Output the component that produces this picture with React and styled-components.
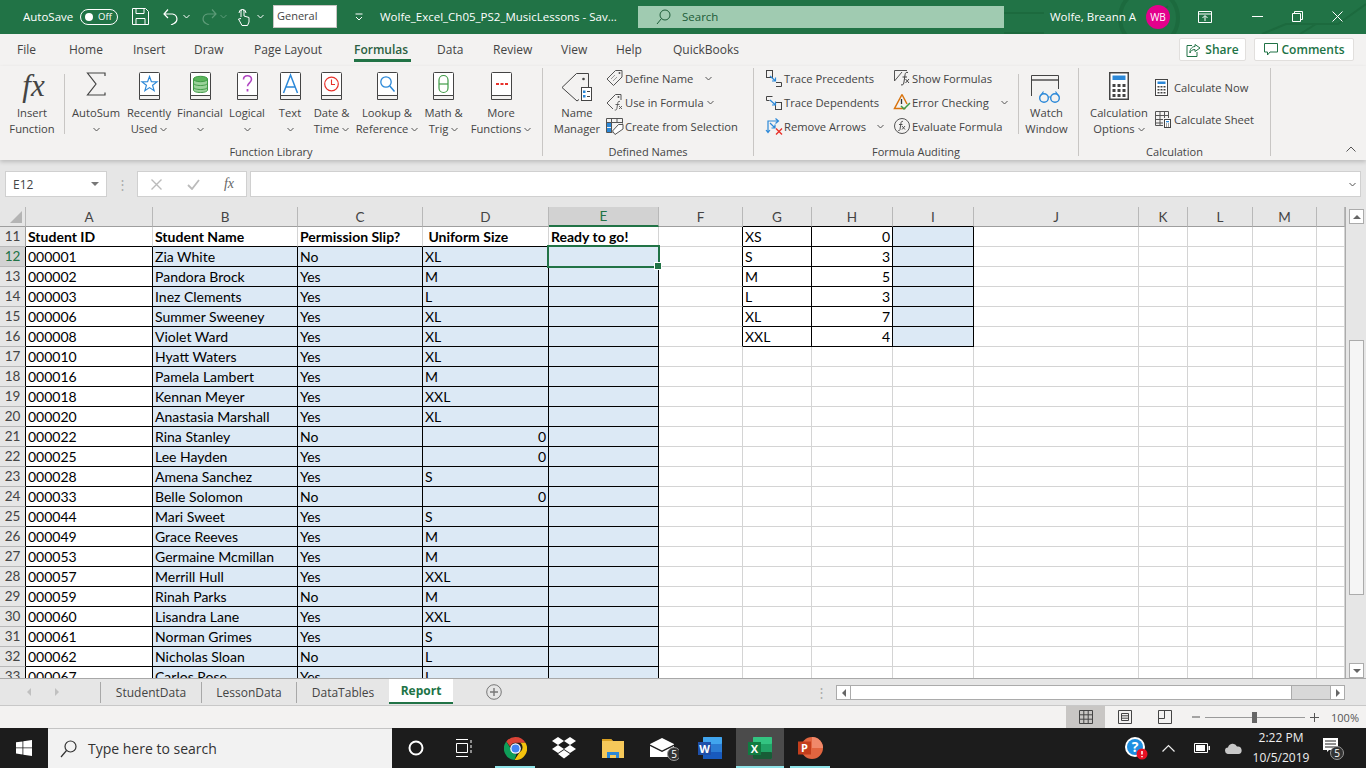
import React from "react";
import styled, { createGlobalStyle } from "styled-components";

const GREEN = "#217346";
const UI = '"Open Sans", "Noto Sans", sans-serif';
const CELL = 'Lato, "Noto Sans", sans-serif';

const Global = createGlobalStyle`
  html, body { margin: 0; padding: 0; background: #e6e6e6; }
  #root { width: 1366px; height: 768px; overflow: hidden; }
  * { box-sizing: border-box; }
`;

const Page = styled.div`
  width: 1366px;
  height: 768px;
  display: flex;
  flex-direction: column;
  font-family: ${UI};
  overflow: hidden;
`;

/* ---------- title bar ---------- */
const TitleBar = styled.div`
  position: relative;
  height: 34px;
  flex: none;
  display: flex;
  align-items: center;
  padding-bottom: 1px;
  background: ${GREEN};
  color: #fff;
  font-size: 11.5px;
`;
const Decor = styled.svg`
  position: absolute;
  top: 0;
  left: 0;
  pointer-events: none;
`;
const Slot = styled.div`
  position: relative;
  flex: none;
  width: ${(p) => p.$w}px;
  height: 100%;
  display: flex;
  align-items: center;
  justify-content: ${(p) => p.$justify || "center"};
  padding-left: ${(p) => p.$pl || 0}px;
  gap: ${(p) => p.$gap || 0}px;
  white-space: nowrap;
`;
const Toggle = styled.div`
  width: 38px;
  height: 16px;
  border: 1px solid #fff;
  border-radius: 8px;
  display: flex;
  align-items: center;
  padding-left: 4px;
  gap: 5px;
  font-size: 9.5px;
  &::before {
    content: "";
    width: 8px;
    height: 8px;
    border-radius: 50%;
    background: #fff;
  }
`;
const StyleBox = styled.div`
  width: 64px;
  height: 23px;
  background: #fff;
  color: #444;
  border: 1px solid #c8c6c4;
  font-size: 11px;
  line-height: 20px;
  padding-left: 3px;
`;
const SearchBox = styled.div`
  width: 366px;
  height: 22px;
  background: #a0cbb1;
  color: #1d5c38;
  display: flex;
  align-items: center;
  gap: 11px;
  padding-left: 18px;
  font-size: 11.5px;
`;
const Avatar = styled.div`
  width: 24px;
  height: 24px;
  border-radius: 50%;
  background: #e3008c;
  color: #fff;
  font-size: 10px;
  display: flex;
  align-items: center;
  justify-content: center;
`;

/* ---------- ribbon ---------- */
const TabRow = styled.div`
  height: 32px;
  flex: none;
  display: flex;
  align-items: flex-start;
  padding: 2px 12px 0 17px;
  background: #f3f2f1;
  color: #444;
  font-size: 12px;
`;
const Tab = styled.div`
  position: relative;
  width: ${(p) => p.$w}px;
  height: 28px;
  line-height: 27px;
  white-space: nowrap;
  color: ${(p) => (p.$active ? "#2b5f41" : "#444")};
  font-weight: ${(p) => (p.$active ? 600 : 400)};
  ${(p) =>
    p.$active &&
    `&::after { content: ""; position: absolute; left: 0; bottom: 2px; width: 57px; height: 3px; background: ${GREEN}; }`}
`;
const TabActions = styled.div`
  margin-left: auto;
  margin-top: 2px;
  display: flex;
  gap: 8px;
`;
const ActionButton = styled.div`
  width: ${(p) => p.$w}px;
  height: 23px;
  background: #fff;
  border: 1px solid #e1dfdd;
  border-radius: 2px;
  color: ${GREEN};
  font-weight: 600;
  font-size: 12px;
  display: flex;
  align-items: center;
  justify-content: center;
  gap: 4px;
`;
const Ribbon = styled.div`
  position: relative;
  z-index: 2;
  height: 94px;
  flex: none;
  display: flex;
  background: #f3f2f1;
  color: #444;
  font-size: 11.2px;
  box-shadow: 0 2px 4px rgba(0, 0, 0, 0.18);
`;
const Group = styled.div`
  width: ${(p) => p.$w}px;
  flex: none;
  display: flex;
  flex-direction: column;
  height: 88px;
  margin-top: 2px;
  border-right: 1px solid #c8c6c4;
`;
const GroupBody = styled.div`
  height: 76px;
  flex: none;
  display: flex;
  align-items: flex-start;
`;
const GroupLabel = styled.div`
  flex: none;
  text-align: center;
  font-size: 11px;
  line-height: 16px;
  color: #444;
`;
const BigButton = styled.div`
  width: ${(p) => p.$w}px;
  flex: none;
  margin-left: ${(p) => p.$ml || 0}px;
  padding-top: 4px;
  display: flex;
  flex-direction: column;
  align-items: center;
  text-align: center;
  line-height: 16px;
  white-space: nowrap;
`;
const BigIcon = styled.div`
  height: 33px;
  display: flex;
  align-items: flex-start;
  justify-content: center;
`;
const FxGlyph = styled.div`
  font-family: "Liberation Serif", serif;
  font-style: italic;
  font-size: 31px;
  line-height: 28px;
  padding-left: 3px;
  color: #444;
`;
const Line = styled.div`
  height: 16px;
  display: flex;
  align-items: center;
  justify-content: center;
  gap: 3px;
`;
const GroupSep = styled.div`
  width: 1px;
  height: 60px;
  margin-top: ${(p) => p.$top}px;
  background: #c8c6c4;
  flex: none;
`;
const SmallColumn = styled.div`
  width: ${(p) => p.$w}px;
  flex: none;
  margin-left: ${(p) => p.$ml || 0}px;
  margin-top: ${(p) => p.$top || 0}px;
`;
const SmallRow = styled.div`
  height: ${(p) => p.$h || 24}px;
  display: flex;
  align-items: center;
  white-space: nowrap;
`;
const SmallIcon = styled.div`
  width: 19px;
  flex: none;
  display: flex;
  align-items: center;
`;
const ChevronGap = styled.span`
  display: inline-flex;
  margin-left: ${(p) => p.$ml}px;
`;
const CollapseBox = styled.div`
  margin-left: auto;
  align-self: flex-end;
  padding: 0 10px 5px 0;
`;

/* ---------- formula bar ---------- */
const FormulaBar = styled.div`
  height: 47px;
  flex: none;
  display: flex;
  align-items: flex-start;
  padding: 11px 5px 0 5px;
  background: #e6e6e6;
`;
const NameBox = styled.div`
  width: 102px;
  height: 26px;
  background: #fff;
  border: 1px solid #d0d0d0;
  color: #444;
  font-size: 12px;
  display: flex;
  align-items: center;
  justify-content: space-between;
  padding: 0 7px;
`;
const Caret = styled.div`
  width: 0;
  height: 0;
  border-left: 4px solid transparent;
  border-right: 4px solid transparent;
  border-top: 4px solid #777;
`;
const Grip = styled.div`
  width: 30px;
  height: 26px;
  flex: none;
  display: flex;
  align-items: center;
  justify-content: center;
  color: #aaa;
  font-size: 13px;
`;
const FxBox = styled.div`
  width: 110px;
  height: 26px;
  flex: none;
  background: #fff;
  border: 1px solid #d0d0d0;
  display: grid;
  grid-template-columns: 37px 36px 36px;
  align-items: center;
  justify-items: center;
  color: #bbb;
`;
const FxSmall = styled.span`
  font-family: "Liberation Serif", serif;
  font-style: italic;
  font-size: 14px;
  color: #666;
`;
const FormulaInput = styled.div`
  flex: 1;
  height: 26px;
  margin-left: 3px;
  background: #fff;
  border: 1px solid #d0d0d0;
  display: flex;
  align-items: center;
  justify-content: flex-end;
  padding-right: 4px;
`;

/* ---------- sheet ---------- */
const COLUMNS = "26px 127px 145px 125px 126px 110px 84px 69px 81px 81px 165px 49px 65px 64px 28px";

const SheetArea = styled.div`
  height: 471px;
  flex: none;
  display: flex;
`;
const SheetMain = styled.div`
  width: 1345px;
  flex: none;
  display: flex;
  flex-direction: column;
`;
const HeaderRow = styled.div`
  display: grid;
  grid-template-columns: ${COLUMNS};
  height: 20px;
  flex: none;
  background: #e6e6e6;
`;
const ColHead = styled.div`
  display: flex;
  align-items: center;
  justify-content: center;
  font-family: ${CELL};
  font-size: 13.5px;
  color: ${(p) => (p.$active ? GREEN : "#444")};
  background: ${(p) => (p.$active ? "#d2d2d2" : "#e6e6e6")};
  border-right: 1px solid #b8b8b8;
  border-bottom: ${(p) => (p.$active ? `2px solid ${GREEN}` : p.$dark ? "1px solid #000" : "1px solid #9e9e9e")};
`;
const Corner = styled.div`
  border-right: 1px solid #b8b8b8;
  border-bottom: 1px solid #9e9e9e;
  display: flex;
  align-items: flex-end;
  justify-content: flex-end;
  padding: 0 3px 3px 0;
  &::after {
    content: "";
    width: 0;
    height: 0;
    border-left: 12px solid transparent;
    border-bottom: 12px solid #b4b4b4;
  }
`;
const Grid = styled.div`
  height: 451px;
  overflow: hidden;
  background: #fff;
`;
const Row = styled.div`
  display: grid;
  grid-template-columns: ${COLUMNS};
  height: 20px;
`;
const RowHead = styled.div`
  background: ${(p) => (p.$active ? "#d2d2d2" : "#e6e6e6")};
  color: ${(p) => (p.$active ? GREEN : "#444")};
  font-family: ${CELL};
  font-size: 13.5px;
  text-align: center;
  line-height: 19px;
  border-bottom: 1px solid #b8b8b8;
  border-right: 1px solid ${(p) => (p.$boxed ? "#000" : "#9e9e9e")};
`;
const Cell = styled.div`
  position: relative;
  font-family: ${CELL};
  font-size: 14px;
  line-height: 19px;
  color: #000;
  font-weight: ${(p) => (p.$bold ? 700 : 400)};
  padding: 0 2px;
  white-space: pre;
  overflow: ${(p) => (p.$selected ? "visible" : "hidden")};
  text-align: ${(p) => (p.$right ? "right" : "left")};
  background: ${(p) => (p.$fill ? "#dce9f5" : "#fff")};
  border-right: 1px solid ${(p) => (p.$edge ? "#000" : "#d4d4d4")};
  border-bottom: 1px solid ${(p) => (p.$under ? "#000" : "#d4d4d4")};
  ${(p) =>
    p.$selected &&
    `
    z-index: 2;
    &::after { content: ""; position: absolute; left: -2px; top: -2px; right: -2px; bottom: -2px; border: 2px solid ${GREEN}; }
    &::before { content: ""; position: absolute; right: -4px; bottom: -4px; width: 6px; height: 6px; background: ${GREEN}; border: 1px solid #fff; z-index: 1; }
  `}
`;
const VScroll = styled.div`
  width: 21px;
  flex: none;
  background: #e6e6e6;
  border-left: 1px solid #ababab;
  display: flex;
  flex-direction: column;
  align-items: center;
  padding: 2px 0 0 1px;
`;
const ScrollButton = styled.div`
  width: 15px;
  height: 15px;
  flex: none;
  background: #fff;
  border: 1px solid #ababab;
  display: flex;
  align-items: center;
  justify-content: center;
`;
const VThumb = styled.div`
  width: 15px;
  height: 255px;
  margin-top: 116px;
  background: #f5f5f5;
  border: 1px solid #ababab;
  flex: none;
`;
const DownButton = styled(ScrollButton)`
  margin-top: auto;
`;
const Arrow = styled.div`
  width: 0;
  height: 0;
  ${(p) =>
    p.$dir === "up"
      ? "border-left:4px solid transparent;border-right:4px solid transparent;border-bottom:4px solid #666;"
      : p.$dir === "down"
      ? "border-left:4px solid transparent;border-right:4px solid transparent;border-top:4px solid #666;"
      : p.$dir === "left"
      ? "border-top:4px solid transparent;border-bottom:4px solid transparent;border-right:4px solid #666;"
      : "border-top:4px solid transparent;border-bottom:4px solid transparent;border-left:4px solid #666;"}
`;

/* ---------- sheet tabs ---------- */
const TabsBar = styled.div`
  height: 28px;
  flex: none;
  display: flex;
  background: #e6e6e6;
  border-top: 1px solid #a8a8a8;
  border-bottom: 1px solid #c8c8c8;
  font-size: 12px;
  color: #444;
`;
const NavArrows = styled.div`
  width: 100px;
  flex: none;
  display: flex;
  align-items: center;
  gap: 24px;
  padding-left: 27px;
`;
const DimArrow = styled.div`
  width: 0;
  height: 0;
  border-top: 4px solid transparent;
  border-bottom: 4px solid transparent;
  ${(p) => (p.$left ? "border-right: 4px solid #c0c0c0;" : "border-left: 4px solid #c0c0c0;")}
`;
const SheetTab = styled.div`
  width: ${(p) => p.$w}px;
  flex: none;
  display: flex;
  align-items: center;
  justify-content: center;
  margin-top: ${(p) => (p.$active ? 0 : 3)}px;
  height: ${(p) => (p.$active ? 25 : 21)}px;
  padding-bottom: ${(p) => (p.$active ? 0 : 1)}px;
  border-left: ${(p) => (p.$active ? "none" : "1px solid #a8a8a8")};
  background: ${(p) => (p.$active ? "#fff" : "transparent")};
  color: ${(p) => (p.$active ? GREEN : "#444")};
  font-weight: ${(p) => (p.$active ? 700 : 400)};
  border-bottom: ${(p) => (p.$active ? `2px solid ${GREEN}` : "none")};
`;
const HScroll = styled.div`
  width: 509px;
  height: 15px;
  margin-top: 6px;
  flex: none;
  display: flex;
  background: #d8d8d8;
  border: 1px solid #ababab;
`;
const HLeft = styled.div`
  width: 14px;
  flex: none;
  background: #fff;
  border-right: 1px solid #ababab;
  display: flex;
  align-items: center;
  justify-content: center;
`;
const HThumb = styled.div`
  width: 441px;
  flex: none;
  background: #fff;
  border-right: 1px solid #ababab;
`;
const HRight = styled(HLeft)`
  margin-left: auto;
  border-right: none;
  border-left: 1px solid #ababab;
`;

/* ---------- status bar ---------- */
const StatusBar = styled.div`
  height: 22px;
  flex: none;
  display: flex;
  background: #f3f2f1;
  color: #555;
  font-size: 11px;
`;
const ViewButton = styled.div`
  width: ${(p) => p.$w}px;
  flex: none;
  display: flex;
  align-items: center;
  justify-content: center;
  background: ${(p) => (p.$active ? "#c8c6c4" : "transparent")};
`;
const ZoomTrack = styled.div`
  position: relative;
  width: 100px;
  height: 1px;
  background: #9a9a9a;
  flex: none;
  align-self: center;
  &::after {
    content: "";
    position: absolute;
    left: 47px;
    top: -5px;
    width: 5px;
    height: 11px;
    background: #666;
  }
`;

/* ---------- taskbar ---------- */
const Taskbar = styled.div`
  height: 40px;
  flex: none;
  display: flex;
  background: #1c1c1c;
  color: #fff;
`;
const TaskSearch = styled.div`
  width: 344px;
  flex: none;
  display: flex;
  align-items: center;
  gap: 11px;
  padding-left: 12px;
  background: #f2f2f2;
  border-top: 1px solid #c4c4c4;
  color: #333;
  font-size: 14px;
`;
const TaskItem = styled.div`
  position: relative;
  width: ${(p) => p.$w}px;
  flex: none;
  display: flex;
  align-items: center;
  justify-content: center;
  background: ${(p) => (p.$current ? "#4b4b4b" : "transparent")};
  ${(p) =>
    p.$line &&
    `&::after { content: ""; position: absolute; left: ${p.$inset || 0}px; right: ${p.$inset || 0}px; bottom: 0; height: 2px; background: #8fe3e8; }`}
`;
const Clock = styled.div`
  width: 66px;
  flex: none;
  display: flex;
  flex-direction: column;
  justify-content: center;
  align-items: center;
  font-size: 12px;
  line-height: 20px;
  color: #eee;
`;

/* ---------- icons ---------- */
const Chevron = ({ color = "#555" }) => (
  <svg width="7" height="5" viewBox="0 0 7 5" fill="none">
    <path d="M.5 1 3.5 4 6.5 1" stroke={color} strokeWidth="1" />
  </svg>
);

const Book = ({ children }) => (
  <svg width="21" height="28" viewBox="0 0 21 28" fill="none">
    <path d="M.5 26V1.5a1 1 0 0 1 1-1h18a1 1 0 0 1 1 1V26" fill="#fff" stroke="#444" />
    <path d="M.5 23.5h20v4H.5z" fill="#f3f2f1" stroke="#444" />
    {children}
  </svg>
);

const stroke = (c, w = 1) => ({ stroke: c, strokeWidth: w, fill: "none" });

const TraceBoxes = ({ flip }) => (
  <svg width="18" height="18" viewBox="0 0 18 18" fill="none">
    {flip ? (
      <>
        <path d="M1.500 3.500h6M1.500 3.500v4h3" {...stroke("#444")} />
        <rect x="10.500" y="9.500" width="6" height="7" {...stroke("#444")} />
      </>
    ) : (
      <>
        <rect x="1.500" y="1.500" width="6" height="7" {...stroke("#444")} />
        <path d="M11 13.500h5.500v4M11 17.500h5.500" {...stroke("#444")} />
      </>
    )}
    <path d="M5 7 10.500 12M10.500 8.500V12H7" {...stroke("#2b88d8", 1.2)} />
  </svg>
);

const BIG_ICONS = {
  sum: (
    <svg width="20" height="25" viewBox="0 0 20 25" fill="none">
      <path d="M19 4V1H1.500L10 12 1.500 23H19v-2.500" stroke="#444" strokeWidth="1.200" />
    </svg>
  ),
  star: (
    <Book>
      <path d="M10.500 4.500l1.900 5.200 5.600.2-4.400 3.400 1.500 5.400-4.600-3.100-4.600 3.100 1.500-5.400L3 9.900l5.600-.2z" {...stroke("#2b88d8", 1.2)} />
    </Book>
  ),
  db: (
    <Book>
      <path d="M3.500 7v11c0 1.600 3.100 2.500 7 2.500s7-.9 7-2.500V7" fill="#9ad29a" stroke="#3f9a46" />
      <ellipse cx="10.500" cy="7" rx="7" ry="2.700" fill="#5cb55c" stroke="#3f9a46" />
      <path d="M3.500 11c0 1.600 3.100 2.500 7 2.500s7-.9 7-2.500M3.500 15c0 1.600 3.100 2.500 7 2.500s7-.9 7-2.500" {...stroke("#3f9a46")} />
    </Book>
  ),
  logical: (
    <Book>
      <path d="M6.500 7.500c0-2.400 1.800-3.800 4-3.800s4 1.500 4 3.600c0 3.400-4 3.600-4 7" {...stroke("#b146c2", 1.6)} />
      <path d="M10.500 17v2.500" {...stroke("#b146c2", 1.8)} />
    </Book>
  ),
  text: (
    <Book>
      <path d="M3.500 21 10.500 3l7 18M6 15h9" {...stroke("#2b88d8", 1.5)} />
    </Book>
  ),
  clock: (
    <Book>
      <circle cx="10.500" cy="12" r="6.800" {...stroke("#e8312a", 1.2)} />
      <path d="M10.500 7.500V12.500H14" {...stroke("#e8312a", 1.1)} />
    </Book>
  ),
  lookup: (
    <Book>
      <circle cx="9" cy="10" r="5.200" {...stroke("#2b88d8", 1.3)} />
      <path d="M12.800 14 17.500 19.500" {...stroke("#2b88d8", 1.5)} />
    </Book>
  ),
  math: (
    <Book>
      <rect x="6" y="3.500" width="9" height="17" rx="4.500" {...stroke("#3f9a46", 1.2)} />
      <path d="M6 12h9" {...stroke("#3f9a46", 1.2)} />
    </Book>
  ),
  more: (
    <Book>
      <path d="M5 12h3M9.500 12h3M14 12h3" {...stroke("#e8312a", 2.2)} />
    </Book>
  ),
  name: (
    <svg width="32" height="32" viewBox="0 0 32 32" fill="none">
      <path d="M1 15.500 15.500 1.500H27.500V15M18 27.500 16 29 1 15.500" {...stroke("#444")} />
      <circle cx="22.500" cy="7" r="1.300" fill="#444" />
      <rect x="20.500" y="15.500" width="10" height="13" fill="#fff" stroke="#444" />
      <path d="M22 18.500h2.500v2.500H22zM22 23h2.500v2.500H22z" fill="#2b88d8" />
      <path d="M26 19.500h3M26 24.500h3" {...stroke("#444")} />
    </svg>
  ),
  watch: (
    <svg width="31" height="32" viewBox="0 -3 31 32" fill="none">
      <path d="M.5 21V.5h27V14" {...stroke("#444")} />
      <path d="M.5 5h27" {...stroke("#444", 1.4)} />
      <circle cx="13" cy="23" r="4.300" {...stroke("#2b88d8", 1.4)} />
      <circle cx="24" cy="23" r="4.300" {...stroke("#2b88d8", 1.4)} />
      <path d="M17.300 22h2.400M9 21.500l3.500-5M28 21.500l-3.500-5" {...stroke("#2b88d8", 1.2)} />
    </svg>
  ),
  calc: (
    <svg width="20" height="28" viewBox="0 0 20 28" fill="none">
      <rect x=".75" y=".75" width="18.500" height="26.500" fill="#fff" stroke="#444" strokeWidth="1.500" />
      <rect x="3.500" y="3.500" width="13" height="4.500" fill="#2b88d8" />
      <path d="M3.500 12h3v3h-3zM8.500 12h3v3h-3zM13.500 12h3v3h-3zM3.500 17h3v3h-3zM8.500 17h3v3h-3zM13.500 17h3v3h-3zM3.500 22h3v3h-3zM8.500 22h3v3h-3zM13.500 22h3v3h-3z" fill="#444" />
    </svg>
  ),
};

const SMALL_ICONS = {
  define: (
    <svg width="18" height="18" viewBox="0 0 18 18" fill="none">
      <path d="M1 10 9.500 1.500H16V8l-8.500 8.500z" {...stroke("#555")} />
      <circle cx="13.500" cy="4" r="1" fill="#555" />
      <path d="M5 10l4-4M7 12l4-4" {...stroke("#999")} />
    </svg>
  ),
  use: (
    <svg width="18" height="18" viewBox="0 0 18 18" fill="none">
      <path d="M7 16 1 10 9.500 1.500H15V7" {...stroke("#555")} />
      <circle cx="12.500" cy="4" r="1" fill="#555" />
      <path d="M14 8.500c-1.500-.5-2 .2-2.300 2l-.8 5c-.2 1.300-1 1.800-2.200 1.500M9.500 11.500h4M13 13l3 3M16 13l-3 3" {...stroke("#555", 0.9)} />
    </svg>
  ),
  create: (
    <svg width="18" height="18" viewBox="0 0 18 18" fill="none">
      <path d="M.5 1.500h16v5M.5 1.500v14h6M.5 5.500h16M5.500 1.500v14M11 1.500v4" {...stroke("#555")} />
      <path d="M1 6h4v4H1zM1 11h4v4H1z" fill="#2b88d8" />
      <path d="M9 17.500 6.500 14l6-6.500H17V12z" fill="#fff" stroke="#555" />
    </svg>
  ),
  remove: (
    <svg width="18" height="18" viewBox="0 0 18 18" fill="none">
      <path d="M3 15V4h10M10.500 1.500 13.500 4l-3 2.500M1 13l2 2.500L5 13M5 6l5 5M10 7.500V11H6.500" {...stroke("#2b88d8", 1.2)} />
      <path d="M11 11.500l6 6M17 11.500l-6 6" {...stroke("#e8312a", 1.4)} />
    </svg>
  ),
  show: (
    <svg width="18" height="18" viewBox="0 0 18 18" fill="none">
      <path d="M1.500 12V1.500H14M1.500 12 9 3" {...stroke("#555")} />
      <path d="M15 3.500c-1.800-.6-2.600.3-2.900 2l-1.300 8.500c-.3 1.700-1.300 2.300-2.800 1.800M9.500 8h4.500M12.500 10l3.500 4M16 10l-3.500 4" {...stroke("#444", 1)} />
    </svg>
  ),
  error: (
    <svg width="18" height="18" viewBox="0 0 18 18" fill="none">
      <path d="M9 1.500 1.500 15.500h11" {...stroke("#d9730d", 1.5)} />
      <path d="M9 1.500 14 11" {...stroke("#d9730d", 1.5)} />
      <path d="M8.500 6v5" {...stroke("#333", 1.3)} />
      <path d="M8 13l3 3 6-6" {...stroke("#3f9a46", 1.5)} />
    </svg>
  ),
  evaluate: (
    <svg width="18" height="18" viewBox="0 0 18 18" fill="none">
      <circle cx="9" cy="9" r="7.500" {...stroke("#555")} />
      <path d="M10 4.500c-1.300-.4-1.800.2-2 1.400L7 12.500c-.2 1-.8 1.300-1.800 1M6 7.500h3.500M9 9l3 3.500M12 9l-3 3.500" {...stroke("#444", 0.9)} />
    </svg>
  ),
  now: (
    <svg width="13" height="17" viewBox="0 0 13 17" fill="none">
      <rect x=".5" y=".5" width="12" height="16" fill="#fff" stroke="#444" />
      <rect x="2.500" y="2.500" width="8" height="2.500" fill="#2b88d8" />
      <path d="M2.500 7h2v1.500h-2zM5.500 7h2v1.500h-2zM8.500 7h2v1.500h-2zM2.500 10h2v1.500h-2zM5.500 10h2v1.500h-2zM8.500 10h2v1.500h-2zM2.500 13h2v1.500h-2zM5.500 13h2v1.500h-2zM8.500 13h2v1.500h-2z" fill="#444" />
    </svg>
  ),
  sheet: (
    <svg width="16" height="17" viewBox="0 0 16 17" fill="none">
      <path d="M8 14.500H.5v-14h13V7M.5 4.500h13M.5 8.500H8M.5 12H8M5 .5v14M9.500.500V7" {...stroke("#555")} />
      <rect x="9.500" y="8.500" width="6" height="8" fill="#fff" stroke="#444" />
      <path d="M11 10h3v1.300h-3z" fill="#2b88d8" />
      <path d="M11 12.500h1v1h-1zM13 12.500h1v1h-1zM11 14.500h1v1h-1zM13 14.500h1v1h-1z" fill="#444" />
    </svg>
  ),
};

const WinLogo = () => (
  <svg width="16" height="16" viewBox="0 0 16 16" fill="#fff">
    <path d="M0 2.300 6.500 1.400V7.500H0zM7.300 1.300 16 0v7.500H7.300zM0 8.300h6.500v6.200L0 13.600zM7.300 8.300H16V16l-8.700-1.300z" />
  </svg>
);

const Chrome = () => (
  <svg width="23" height="23" viewBox="0 0 24 24">
    <path d="M12 0a12 12 0 0 1 10.400 6H12a6 6 0 0 0-5.700 4L2.400 4.700A12 12 0 0 1 12 0z" fill="#db4437" />
    <path d="M22.400 6A12 12 0 0 1 11 24l5.200-8a6 6 0 0 0 .8-10z" fill="#f4c20d" />
    <path d="M2.400 4.700 7 12a6 6 0 0 0 6 6l-2 6A12 12 0 0 1 2.400 4.700z" fill="#0f9d58" />
    <circle cx="12" cy="12" r="5.500" fill="#fff" />
    <circle cx="12" cy="12" r="4.200" fill="#4285f4" />
  </svg>
);
const Dropbox = () => (
  <svg width="24" height="22" viewBox="0 0 24 22" fill="#fff">
    <path d="M6 0l6 4-6 4-6-4zM18 0l6 4-6 4-6-4zM6 8l6 4-6 4-6-4zM18 8l6 4-6 4-6-4zM6 17l6-4 6 4-6 4.500z" />
  </svg>
);
const Explorer = () => (
  <svg width="22" height="20" viewBox="0 0 22 20">
    <path d="M0 1h9l2 2h11v17H0z" fill="#f6c95a" />
    <path d="M0 1h9l1.500 2H0z" fill="#d9a021" />
    <path d="M5 20v-6h12v6h-3v-3H8v3z" fill="#2b88d8" />
  </svg>
);
const Mail = () => (
  <svg width="34" height="26" viewBox="0 0 34 26">
    <path d="M5 9 17 3l12 6v.5L17 15.500 5 9.500z" fill="#fff" />
    <path d="M5 11 17 17l12-6v11H5z" fill="#fff" />
    <circle cx="29" cy="19" r="6.500" fill="#333" stroke="#9a9a9a" />
    <text x="29" y="22.500" textAnchor="middle" fontSize="10" fontFamily="Open Sans, sans-serif" fill="#fff">5</text>
  </svg>
);
const Office = ({ back, mid, front, square, letter }) => (
  <svg width="25" height="22" viewBox="0 0 25 22">
    <rect x="5" y="0" width="19" height="22" rx="1" fill={mid} />
    <rect x="5" y="0" width="19" height="7" rx="1" fill={back} />
    <rect x="5" y="15" width="19" height="7" rx="1" fill={front} />
    <rect x="0" y="5" width="13" height="13" fill={square} />
    <text x="6.500" y="15.500" textAnchor="middle" fontSize="11" fontWeight="700" fontFamily="Open Sans, sans-serif" fill="#fff">{letter}</text>
  </svg>
);
const Powerpoint = () => (
  <svg width="25" height="22" viewBox="0 0 25 22">
    <circle cx="14" cy="11" r="11" fill="#e2653f" />
    <path d="M14 0a11 11 0 0 1 11 11H14z" fill="#f0896a" />
    <rect x="0" y="4.500" width="13" height="13" fill="#c43e1c" />
    <text x="6.500" y="15" textAnchor="middle" fontSize="11" fontWeight="700" fontFamily="Open Sans, sans-serif" fill="#fff">P</text>
  </svg>
);

/* ---------- data ---------- */
const LETTERS = "ABCDEFGHIJKLMN".split("");
const STUDENTS = [
  ["000001", "Zia White", "No", "XL"],
  ["000002", "Pandora Brock", "Yes", "M"],
  ["000003", "Inez Clements", "Yes", "L"],
  ["000006", "Summer Sweeney", "Yes", "XL"],
  ["000008", "Violet Ward", "Yes", "XL"],
  ["000010", "Hyatt Waters", "Yes", "XL"],
  ["000016", "Pamela Lambert", "Yes", "M"],
  ["000018", "Kennan Meyer", "Yes", "XXL"],
  ["000020", "Anastasia Marshall", "Yes", "XL"],
  ["000022", "Rina Stanley", "No", 0],
  ["000025", "Lee Hayden", "Yes", 0],
  ["000028", "Amena Sanchez", "Yes", "S"],
  ["000033", "Belle Solomon", "No", 0],
  ["000044", "Mari Sweet", "Yes", "S"],
  ["000049", "Grace Reeves", "Yes", "M"],
  ["000053", "Germaine Mcmillan", "Yes", "M"],
  ["000057", "Merrill Hull", "Yes", "XXL"],
  ["000059", "Rinah Parks", "No", "M"],
  ["000060", "Lisandra Lane", "Yes", "XXL"],
  ["000061", "Norman Grimes", "Yes", "S"],
  ["000062", "Nicholas Sloan", "No", "L"],
  ["000067", "Carlos Rose", "Yes", "L"],
];
const SIZES = [
  ["XS", 0],
  ["S", 3],
  ["M", 5],
  ["L", 3],
  ["XL", 7],
  ["XXL", 4],
];
const LIBRARY = [
  ["sum", 52, 5, "AutoSum", "", true],
  ["star", 54, 0, "Recently", "Used", true],
  ["db", 48, 0, "Financial", "", true],
  ["logical", 46, 0, "Logical", "", true],
  ["text", 40, 0, "Text", "", true],
  ["clock", 43, 0, "Date &", "Time", true],
  ["lookup", 68, 0, "Lookup &", "Reference", true],
  ["math", 45, 0, "Math &", "Trig", true],
  ["more", 70, 0, "More", "Functions", true],
];
const TABS = [
  ["File", 52],
  ["Home", 64],
  ["Insert", 61],
  ["Draw", 60],
  ["Page Layout", 100],
  ["Formulas", 83],
  ["Data", 56],
  ["Review", 68],
  ["View", 55],
  ["Help", 57],
  ["QuickBooks", 100],
];

const Big = ({ icon, w, ml, line1, line2, chevron }) => (
  <BigButton $w={w} $ml={ml}>
    <BigIcon>{BIG_ICONS[icon]}</BigIcon>
    <Line>{line1}</Line>
    <Line>
      {line2}
      {chevron && <Chevron />}
    </Line>
  </BigButton>
);

const Small = ({ icon, label, chevron, h }) => (
  <SmallRow $h={h}>
    <SmallIcon>{icon}</SmallIcon>
    {label}
    {chevron && (
      <ChevronGap $ml={chevron}>
        <Chevron />
      </ChevronGap>
    )}
  </SmallRow>
);

const SheetRow = ({ num, student, size, first }) => {
  const boxed = !!student;
  const active = num === 12;
  const side = !!size;
  return (
    <Row>
      <RowHead $active={active} $boxed={boxed}>{num}</RowHead>
      {first ? (
        <>
          <Cell $bold $under>Student ID</Cell>
          <Cell $bold $under>Student Name</Cell>
          <Cell $bold $under>Permission Slip?</Cell>
          <Cell $bold $under>{" Uniform Size"}</Cell>
          <Cell $bold $under>Ready to go!</Cell>
        </>
      ) : boxed ? (
        <>
          <Cell $edge $under>{student[0]}</Cell>
          <Cell $fill $edge $under>{student[1]}</Cell>
          <Cell $fill $edge $under>{student[2]}</Cell>
          <Cell $fill $edge $under $right={student[3] === 0}>{student[3]}</Cell>
          <Cell $fill $edge $under $selected={active} />
        </>
      ) : (
        <>
          <Cell />
          <Cell />
          <Cell />
          <Cell />
          <Cell />
        </>
      )}
      <Cell $edge={side} />
      {side ? (
        <>
          <Cell $edge $under>{size[0]}</Cell>
          <Cell $edge $under $right>{size[1]}</Cell>
          <Cell $fill $edge $under />
        </>
      ) : (
        <>
          <Cell />
          <Cell />
          <Cell />
        </>
      )}
      <Cell />
      <Cell />
      <Cell />
      <Cell />
      <Cell />
    </Row>
  );
};

export default function App() {
  const rows = [];
  for (let n = 11; n <= 33; n++) rows.push(n);

  return (
    <Page>
      <Global />
      <TitleBar>
        <Decor width="1366" height="34" viewBox="0 0 1366 34" fill="none">
          <circle cx="1149" cy="18" r="29" stroke="#1c6a3e" strokeWidth="4" />
          <path d="M1004 13h40M1004 33h40M1168 6l-16 14M1262 34l24-10h52l28-20M1300 34l16-10" stroke="#1c6a3e" strokeWidth="2" />
        </Decor>
        <Slot $w={80} $justify="flex-start" $pl={23}>AutoSave</Slot>
        <Slot $w={38}><Toggle>Off</Toggle></Slot>
        <Slot $w={44}>
          <svg width="17" height="17" viewBox="0 0 17 17" fill="none" stroke="#fff">
            <path d="M.5 .5h13l3 3v13H.5z" />
            <path d="M4 .5v5h8v-5M4 16.500v-6h9v6" />
          </svg>
        </Slot>
        <Slot $w={29} $gap={4}>
          <svg width="16" height="17" viewBox="0 0 16 17" fill="none" stroke="#fff" strokeWidth="1.200">
            <path d="M1 6h8.500a5 5 0 0 1 1.500 9.500L8 17M5 1.500 1 6l4 4" />
          </svg>
          <Chevron color="#fff" />
        </Slot>
        <Slot $w={46} $gap={3}>
          <svg width="16" height="17" viewBox="0 0 16 17" fill="none" stroke="#5d9b78" strokeWidth="1.200">
            <path d="M15 6H6.500a5 5 0 0 0-1.500 9.500L8 17M11 1.500 15 6l-4 4" />
          </svg>
          <Chevron color="#5d9b78" />
        </Slot>
        <Slot $w={36} $gap={6} $justify="flex-start">
          <svg width="14" height="18" viewBox="0 0 14 18" fill="none" stroke="#fff">
            <path d="M4 9V3a1.500 1.500 0 0 1 3 0v5l5 1.500V14l-1.500 3.500H5L1.500 11 4 10.500" />
            <path d="M2 5a3.500 3.500 0 0 1 7 0" />
          </svg>
          <Chevron color="#fff" />
        </Slot>
        <Slot $w={64}><StyleBox>General</StyleBox></Slot>
        <Slot $w={43}>
          <svg width="8" height="8" viewBox="0 0 8 8" fill="none" stroke="#fff">
            <path d="M.5 1h7M1 4l3 3 3-3" />
          </svg>
        </Slot>
        <Slot $w={258} $justify="flex-start">{"Wolfe_Excel_Ch05_PS2_MusicLessons  -  Sav..."}</Slot>
        <Slot $w={412} $justify="flex-start">
          <SearchBox>
            <svg width="15" height="16" viewBox="0 0 15 16" fill="none" stroke="#1d5c38">
              <circle cx="9" cy="6" r="5" />
              <path d="M5.500 9.500 1 15" />
            </svg>
            Search
          </SearchBox>
        </Slot>
        <Slot $w={96} $justify="flex-start">Wolfe, Breann A</Slot>
        <Slot $w={24}><Avatar>WB</Avatar></Slot>
        <Slot $w={70}>
          <svg width="14" height="12" viewBox="0 0 14 12" fill="none" stroke="#fff">
            <path d="M.5 .5h13v11H.5zM.5 3h13M7 10V5M4.500 7 7 4.500 9.500 7" />
          </svg>
        </Slot>
        <Slot $w={34}>
          <svg width="11" height="1" viewBox="0 0 11 1"><path d="M0 .5h11" stroke="#fff" /></svg>
        </Slot>
        <Slot $w={46}>
          <svg width="11" height="11" viewBox="0 0 11 11" fill="none" stroke="#fff">
            <path d="M.5 2.500h8v8h-8zM2.500 2.500v-2h8v8h-2" />
          </svg>
        </Slot>
        <Slot $w={34}>
          <svg width="11" height="11" viewBox="0 0 11 11" fill="none" stroke="#fff">
            <path d="M.5 .5l10 10M10.500 .5l-10 10" />
          </svg>
        </Slot>
      </TitleBar>

      <TabRow>
        {TABS.map(([label, w]) => (
          <Tab key={label} $w={w} $active={label === "Formulas"}>{label}</Tab>
        ))}
        <TabActions>
          <ActionButton $w={67}>
            <svg width="15" height="14" viewBox="0 0 15 14" fill="none" stroke="#217346">
              <path d="M9 1.500 14 5 9 8.500V6.500C6 6.500 4.500 8 4 10 3.500 7 5.500 3.500 9 3.500zM6 2.500H1v11h10V9" />
            </svg>
            Share
          </ActionButton>
          <ActionButton $w={100}>
            <svg width="14" height="13" viewBox="0 0 14 13" fill="none" stroke="#217346">
              <path d="M.5 .5h13v8.500H6L3.500 12V9H.5z" />
            </svg>
            Comments
          </ActionButton>
        </TabActions>
      </TabRow>

      <Ribbon>
        <Group $w={543}>
          <GroupBody>
            <BigButton $w={64}>
              <BigIcon><FxGlyph>fx</FxGlyph></BigIcon>
              <Line>Insert</Line>
              <Line>Function</Line>
            </BigButton>
            <GroupSep $top={6} />
            {LIBRARY.map(([icon, w, ml, line1, line2, chevron]) => (
              <Big key={icon} icon={icon} w={w} ml={ml} line1={line1} line2={line2} chevron={chevron} />
            ))}
          </GroupBody>
          <GroupLabel>Function Library</GroupLabel>
        </Group>
        <Group $w={211}>
          <GroupBody>
            <Big icon="name" w={58} ml={5} line1="Name" line2="Manager" />
            <SmallColumn $w={140} $top={-2}>
              <Small icon={SMALL_ICONS.define} label="Define Name" chevron={12} />
              <Small icon={SMALL_ICONS.use} label="Use in Formula" chevron={3} />
              <Small icon={SMALL_ICONS.create} label="Create from Selection" />
            </SmallColumn>
          </GroupBody>
          <GroupLabel>Defined Names</GroupLabel>
        </Group>
        <Group $w={325}>
          <GroupBody>
            <SmallColumn $w={128} $ml={11} $top={-2}>
              <Small icon={<TraceBoxes />} label="Trace Precedents" />
              <Small icon={<TraceBoxes flip />} label="Trace Dependents" />
              <Small icon={SMALL_ICONS.remove} label="Remove Arrows" chevron={11} />
            </SmallColumn>
            <SmallColumn $w={125} $top={-2}>
              <Small icon={SMALL_ICONS.show} label="Show Formulas" />
              <Small icon={SMALL_ICONS.error} label="Error Checking" chevron={12} />
              <Small icon={SMALL_ICONS.evaluate} label="Evaluate Formula" />
            </SmallColumn>
            <GroupSep $top={6} />
            <Big icon="watch" w={55} line1="Watch" line2="Window" />
          </GroupBody>
          <GroupLabel>Formula Auditing</GroupLabel>
        </Group>
        <Group $w={192}>
          <GroupBody>
            <Big icon="calc" w={72} ml={4} line1="Calculation" line2="Options" chevron />
            <SmallColumn $w={112} $top={3}>
              <Small icon={SMALL_ICONS.now} label="Calculate Now" h={32} />
              <Small icon={SMALL_ICONS.sheet} label="Calculate Sheet" h={32} />
            </SmallColumn>
          </GroupBody>
          <GroupLabel>Calculation</GroupLabel>
        </Group>
        <CollapseBox>
          <svg width="10" height="6" viewBox="0 0 10 6" fill="none" stroke="#555">
            <path d="M.5 5.500 5 1l4.500 4.500" />
          </svg>
        </CollapseBox>
      </Ribbon>

      <FormulaBar>
        <NameBox>E12<Caret /></NameBox>
        <Grip>⋮</Grip>
        <FxBox>
          <svg width="11" height="11" viewBox="0 0 11 11" fill="none" stroke="#bbb" strokeWidth="1.400">
            <path d="M.5 .5l10 10M10.500 .5l-10 10" />
          </svg>
          <svg width="13" height="11" viewBox="0 0 13 11" fill="none" stroke="#bbb" strokeWidth="1.800">
            <path d="M1 6l4 4 7-9" />
          </svg>
          <FxSmall>fx</FxSmall>
        </FxBox>
        <FormulaInput><Chevron /></FormulaInput>
      </FormulaBar>

      <SheetArea>
        <SheetMain>
          <HeaderRow>
            <Corner />
            {LETTERS.map((l) => (
              <ColHead key={l} $active={l === "E"} $dark={"GHI".includes(l)}>{l === "N" ? "" : l}</ColHead>
            ))}
          </HeaderRow>
          <Grid>
            {rows.map((n) => (
              <SheetRow
                key={n}
                num={n}
                first={n === 11}
                student={n >= 12 ? STUDENTS[n - 12] : null}
                size={n <= 16 ? SIZES[n - 11] : null}
              />
            ))}
          </Grid>
        </SheetMain>
        <VScroll>
          <ScrollButton><Arrow $dir="up" /></ScrollButton>
          <VThumb />
          <DownButton><Arrow $dir="down" /></DownButton>
        </VScroll>
      </SheetArea>

      <TabsBar>
        <NavArrows>
          <DimArrow $left />
          <DimArrow />
        </NavArrows>
        <SheetTab $w={101}>StudentData</SheetTab>
        <SheetTab $w={95}>LessonData</SheetTab>
        <SheetTab $w={93}>DataTables</SheetTab>
        <SheetTab $w={64} $active>Report</SheetTab>
        <Slot $w={82}>
          <svg width="16" height="16" viewBox="0 0 16 16" fill="none" stroke="#777">
            <circle cx="8" cy="8" r="7.300" />
            <path d="M8 4v8M4 8h8" strokeWidth="1.400" />
          </svg>
        </Slot>
        <Slot $w={301} $justify="flex-end">
          <Grip>⋮</Grip>
        </Slot>
        <HScroll>
          <HLeft><Arrow $dir="left" /></HLeft>
          <HThumb />
          <HRight><Arrow $dir="right" /></HRight>
        </HScroll>
      </TabsBar>

      <StatusBar>
        <Slot $w={1066} />
        <ViewButton $w={39} $active>
          <svg width="14" height="14" viewBox="0 0 14 14" fill="none" stroke="#444">
            <path d="M.5 .5h13v13H.5zM.5 4.800h13M.5 9.200h13M4.800 .5v13M9.200 .5v13" />
          </svg>
        </ViewButton>
        <ViewButton $w={40}>
          <svg width="14" height="14" viewBox="0 0 14 14" fill="none" stroke="#444">
            <path d="M.5 .5h13v13H.5zM3.500 3.500h7v7h-7zM3.500 5.800h7M3.500 8.200h7" />
          </svg>
        </ViewButton>
        <ViewButton $w={40}>
          <svg width="14" height="14" viewBox="0 0 14 14" fill="none" stroke="#444">
            <path d="M.5 .5h13v13H.5zM6.500 .5v8H.5" />
          </svg>
        </ViewButton>
        <Slot $w={15} $justify="flex-end">
          <svg width="8" height="2" viewBox="0 0 8 2"><path d="M0 1h8" stroke="#555" /></svg>
        </Slot>
        <Slot $w={5} />
        <ZoomTrack />
        <Slot $w={19}>
          <svg width="9" height="9" viewBox="0 0 9 9"><path d="M0 4.500h9M4.500 0v9" stroke="#555" /></svg>
        </Slot>
        <Slot $w={42}>100%</Slot>
      </StatusBar>

      <Taskbar>
        <TaskItem $w={48}><WinLogo /></TaskItem>
        <TaskSearch>
          <svg width="17" height="18" viewBox="0 0 17 18" fill="none" stroke="#333" strokeWidth="1.200">
            <circle cx="10.500" cy="6.500" r="5.500" />
            <path d="M6.500 10.500 1 17" />
          </svg>
          Type here to search
        </TaskSearch>
        <TaskItem $w={48}>
          <svg width="16" height="16" viewBox="0 0 16 16" fill="none" stroke="#fff" strokeWidth="2">
            <circle cx="8" cy="8" r="6.500" />
          </svg>
        </TaskItem>
        <TaskItem $w={47}>
          <svg width="18" height="18" viewBox="0 0 18 18" fill="none" stroke="#fff">
            <path d="M1 .5h12M1 17.500h12M1.500 4.500h11v9h-11zM16 1v3M16 6v3M16 11v3" />
          </svg>
        </TaskItem>
        <TaskItem $w={56} $line $inset={8}><Chrome /></TaskItem>
        <TaskItem $w={42}><Dropbox /></TaskItem>
        <TaskItem $w={55}><Explorer /></TaskItem>
        <TaskItem $w={44}><Mail /></TaskItem>
        <TaskItem $w={52}>
          <Office back="#41a5ee" mid="#2b7cd3" front="#185abd" square="#1e4fa8" letter="W" />
        </TaskItem>
        <TaskItem $w={48} $current $line>
          <Office back="#33c481" mid="#21a366" front="#185c37" square="#107c41" letter="X" />
        </TaskItem>
        <TaskItem $w={52} $line $inset={6}><Powerpoint /></TaskItem>
        <Slot $w={284} />
        <TaskItem $w={32}>
          <svg width="24" height="24" viewBox="0 0 24 24">
            <circle cx="11" cy="11" r="10" fill="#fff" />
            <circle cx="11" cy="11" r="8" fill="#1e8fe1" />
            <text x="11" y="16" textAnchor="middle" fontSize="14" fontWeight="700" fontFamily="Open Sans, sans-serif" fill="#fff">?</text>
            <circle cx="18" cy="18" r="5.500" fill="#e81123" />
            <path d="M18 15v3.500M18 20v1.200" stroke="#fff" strokeWidth="1.500" />
          </svg>
        </TaskItem>
        <TaskItem $w={33}>
          <svg width="13" height="8" viewBox="0 0 13 8" fill="none" stroke="#eee" strokeWidth="1.200">
            <path d="M.5 7.500 6.500 1.500l6 6" />
          </svg>
        </TaskItem>
        <TaskItem $w={33}>
          <svg width="16" height="10" viewBox="0 0 16 10">
            <path d="M.5 .5h13v9H.5z" fill="none" stroke="#fff" />
            <path d="M2 2h9v6H2z" fill="#fff" />
            <path d="M14.500 3h1.500v4h-1.500z" fill="#fff" />
          </svg>
        </TaskItem>
        <TaskItem $w={30}>
          <svg width="17" height="11" viewBox="0 0 17 11">
            <path d="M3.500 11a3.200 3.200 0 0 1-.5-6.400A4.800 4.800 0 0 1 12 3.500a3.800 3.800 0 0 1 1.500 7.500z" fill="#c8c8c8" />
          </svg>
        </TaskItem>
        <Clock>
          <div>2:22 PM</div>
          <div>10/5/2019</div>
        </Clock>
        <TaskItem $w={38}>
          <svg width="24" height="24" viewBox="0 0 24 24">
            <path d="M2 2h15v12H8l-2 2v-2H2z" fill="#fff" />
            <path d="M4 5h11M4 8h11M4 11h11" stroke="#222" />
            <circle cx="16" cy="17" r="6.500" fill="#333" stroke="#9a9a9a" />
            <text x="16" y="20.500" textAnchor="middle" fontSize="10" fontFamily="Open Sans, sans-serif" fill="#fff">5</text>
          </svg>
        </TaskItem>
      </Taskbar>
    </Page>
  );
}
